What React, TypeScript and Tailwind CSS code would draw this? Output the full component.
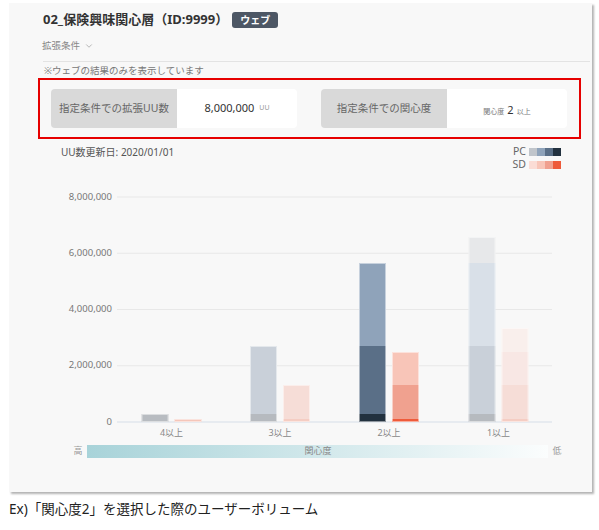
import { ChevronDown } from "lucide-react";

type Cat = { label: string; cx: number; pc: string[]; sd: string[] };

// bar segment tops (px above baseline), bottom level first
const pcSteps = [8, 76, 159, 185];
const sdSteps = [3, 37, 70, 94];

const cats: Cat[] = [
  { label: "4以上", cx: 162.5, pc: ["#b8bcc1"], sd: ["#f5c6ba"] },
  { label: "3以上", cx: 271, pc: ["#b6babf", "#c9d0d9"], sd: ["#f5cdc3", "#f6ddd7"] },
  {
    label: "2以上",
    cx: 380,
    pc: ["#22313f", "#5a6f87", "#8fa3ba"],
    sd: ["#ef5b3b", "#f0a18f", "#f8c5b8"],
  },
  {
    label: "1以上",
    cx: 489.5,
    pc: ["#b6babf", "#c9d0d9", "#d9e0e8", "#e7e8ea"],
    sd: ["#f5cdc3", "#f6ddd7", "#f8e7e4", "#f9efec"],
  },
];

const ticks = ["8,000,000", "6,000,000", "4,000,000", "2,000,000", "0"];
const base = 249;
const step = 56.25;

const pcLegend = ["#c0c5cb", "#8fa3ba", "#5a6f87", "#22313f"];
const sdLegend = ["#fbdcd5", "#f8c5b8", "#f0a08f", "#ee5a3a"];

function Bar({ x, colors, steps }: { x: number; colors: string[]; steps: number[] }) {
  return (
    <g>
      {colors.map((c, i) => {
        const top = steps[i];
        const bottom = i === 0 ? 0 : steps[i - 1];
        return (
          <rect key={i} x={x} y={base - top} width={27} height={top - bottom} fill={c} />
        );
      })}
      <rect
        x={x + 0.5}
        y={base - steps[colors.length - 1] + 0.5}
        width={26}
        height={steps[colors.length - 1] - 1}
        fill="none"
        stroke="#ffffff"
        strokeOpacity={0.5}
      />
    </g>
  );
}

function Chart() {
  return (
    <svg width={583} height={298} className="mt-[2px] block">
      <defs>
        <linearGradient id="interest" x1="0" x2="1" y1="0" y2="0">
          <stop offset="0" stopColor="#a8d3d9" />
          <stop offset="1" stopColor="#fbfdfd" />
        </linearGradient>
      </defs>
      {ticks.map((t, i) => {
        const y = base - (4 - i) * step;
        return (
          <g key={t}>
            <text x={103} y={y} textAnchor="end" dominantBaseline="middle" fontSize={9.5} fill="#777">
              {t}
            </text>
            <line
              x1={108}
              x2={543}
              y1={y}
              y2={y}
              stroke={i === 4 ? "#d6dee8" : "#e8e8e8"}
              strokeWidth={1}
            />
          </g>
        );
      })}
      {cats.map((c) => (
        <g key={c.label}>
          <Bar x={c.cx - 30} colors={c.pc} steps={pcSteps} />
          <Bar x={c.cx + 3} colors={c.sd} steps={sdSteps} />
          <text x={c.cx} y={261} textAnchor="middle" dominantBaseline="middle" fontSize={9} fill="#888">
            {c.label}
          </text>
        </g>
      ))}
      <rect x={78} y={272} width={461} height={13} fill="url(#interest)" />
      <text x={69} y={279} textAnchor="middle" dominantBaseline="middle" fontSize={9} fill="#999">
        高
      </text>
      <text x={309} y={279} textAnchor="middle" dominantBaseline="middle" fontSize={9} fill="#888">
        関心度
      </text>
      <text x={548} y={279} textAnchor="middle" dominantBaseline="middle" fontSize={9} fill="#999">
        低
      </text>
    </svg>
  );
}

export default function App() {
  return (
    <div className="w-[599px] h-[530px] bg-white overflow-hidden font-['Noto_Sans','Noto_Sans_CJK_JP',sans-serif]">
      <div className="ml-[9px] mt-[3px] w-[583px] h-[489px] bg-[#f8f8f8] shadow-[2px_2px_2px_rgba(0,0,0,0.3)] pt-[7px]">
        <div className="ml-[34px] flex h-[20px] items-center gap-[4px]">
          <span className="text-[13px] font-bold text-[#333]">02_保険興味関心層（ID:9999）</span>
          <span className="flex h-[16px] w-[46px] items-center justify-center rounded-[3px] bg-[#4d5765] text-[10px] font-bold text-white">
            ウェブ
          </span>
        </div>
        <div className="ml-[33px] mt-[8px] flex h-[16px] items-center gap-[4px] text-[9.5px] text-[#888]">
          拡張条件
          <ChevronDown className="h-[10px] w-[10px] text-[#aaa]" strokeWidth={2} />
        </div>
        <div className="ml-[34px] mr-[2px] mt-[7px] h-px bg-[#e3e3e3]" />
        <div className="ml-[35px] mt-[3px] text-[9.5px] leading-[12px] text-[#777]">
          ※ウェブの結果のみを表示しています
        </div>
        <div className="ml-[29px] mt-[1px] flex h-[61px] w-[543px] items-center gap-[24px] border-2 border-[#e60000] pl-[11px]">
          <div className="flex h-[39px] w-[246px] overflow-hidden rounded-[4px]">
            <div className="flex w-[126px] items-center justify-center bg-[#d9d9d9] text-[10.5px] text-[#666]">
              指定条件での拡張UU数
            </div>
            <div className="flex flex-1 items-center justify-center gap-[5px] bg-white">
              <span className="text-[11px] text-[#333]">8,000,000</span>
              <span className="text-[7px] text-[#999]">UU</span>
            </div>
          </div>
          <div className="flex h-[39px] w-[246px] overflow-hidden rounded-[4px]">
            <div className="flex w-[126px] items-center justify-center bg-[#d9d9d9] text-[10.5px] text-[#666]">
              指定条件での関心度
            </div>
            <div className="flex flex-1 items-baseline justify-center gap-[3px] bg-white pt-[13px]">
              <span className="text-[7px] text-[#777]">関心度</span>
              <span className="text-[11px] text-[#333]">2</span>
              <span className="text-[7px] text-[#777]">以上</span>
            </div>
          </div>
        </div>
        <div className="ml-[52px] mr-[31px] mt-[6px] flex justify-between">
          <div className="text-[10px] leading-[14px] text-[#555]">UU数更新日: 2020/01/01</div>
          <div className="flex flex-col items-end">
            <div className="flex h-[13px] items-center gap-[3px]">
              <span className="text-[10.5px] text-[#666]">PC</span>
              <div className="flex">
                {pcLegend.map((c) => (
                  <div key={c} className="h-[8px] w-[8px]" style={{ backgroundColor: c }} />
                ))}
              </div>
            </div>
            <div className="flex h-[13px] items-center gap-[3px]">
              <span className="text-[10.5px] text-[#666]">SD</span>
              <div className="flex">
                {sdLegend.map((c) => (
                  <div key={c} className="h-[8px] w-[8px]" style={{ backgroundColor: c }} />
                ))}
              </div>
            </div>
          </div>
        </div>
        <Chart />
      </div>
      <div className="ml-[9px] mt-[7px] text-[13.5px] leading-[20px] text-[#222]">
        Ex)「関心度2」を選択した際のユーザーボリューム
      </div>
    </div>
  );
}
